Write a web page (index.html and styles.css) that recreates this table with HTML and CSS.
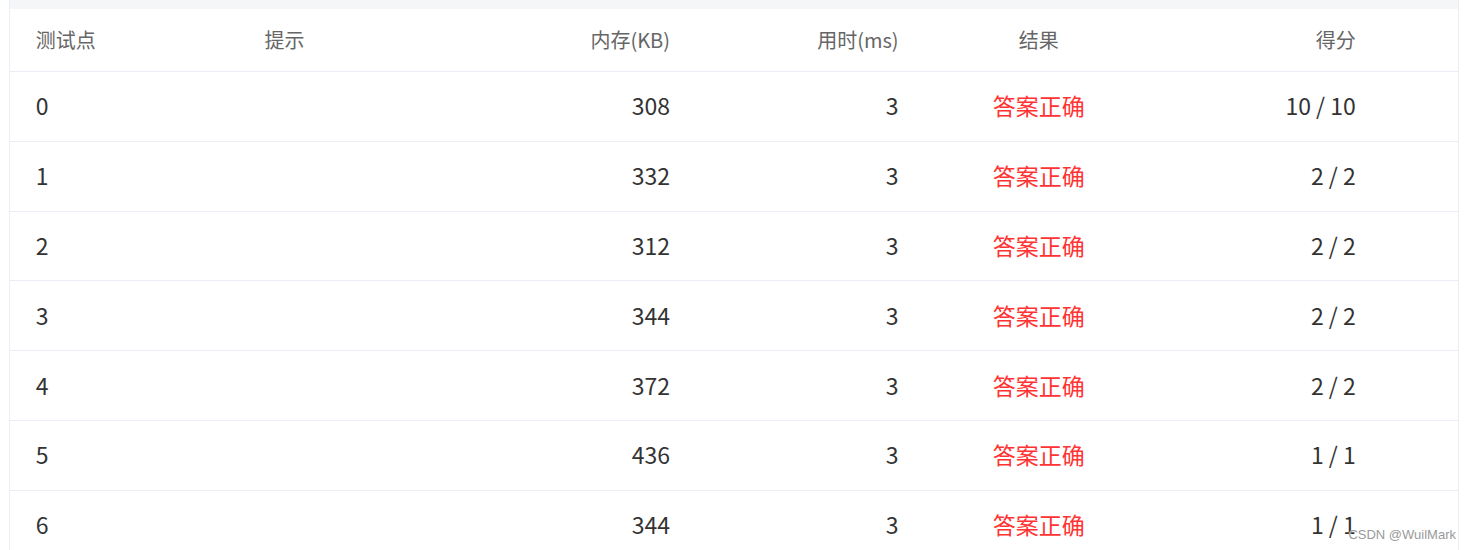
FILE: index.html
```html
<!DOCTYPE html>
<html lang="zh">
<head>
<meta charset="utf-8">
<title>测试点结果</title>
<link rel="stylesheet" href="styles.css">
</head>
<body>
<div class="panel">
  <div class="topband"></div>
  <div class="table">
    <div class="row head">
      <div class="c l">测试点</div>
      <div class="c l">提示</div>
      <div class="c r">内存(KB)</div>
      <div class="c r">用时(ms)</div>
      <div class="c m">结果</div>
      <div class="c r">得分</div>
      <div class="c"></div>
    </div>
    <div class="row">
      <div class="c l">0</div><div class="c l"></div><div class="c r">308</div><div class="c r">3</div><div class="c m ok">答案正确</div><div class="c r">10 / 10</div><div class="c"></div>
    </div>
    <div class="row">
      <div class="c l">1</div><div class="c l"></div><div class="c r">332</div><div class="c r">3</div><div class="c m ok">答案正确</div><div class="c r">2 / 2</div><div class="c"></div>
    </div>
    <div class="row">
      <div class="c l">2</div><div class="c l"></div><div class="c r">312</div><div class="c r">3</div><div class="c m ok">答案正确</div><div class="c r">2 / 2</div><div class="c"></div>
    </div>
    <div class="row">
      <div class="c l">3</div><div class="c l"></div><div class="c r">344</div><div class="c r">3</div><div class="c m ok">答案正确</div><div class="c r">2 / 2</div><div class="c"></div>
    </div>
    <div class="row">
      <div class="c l">4</div><div class="c l"></div><div class="c r">372</div><div class="c r">3</div><div class="c m ok">答案正确</div><div class="c r">2 / 2</div><div class="c"></div>
    </div>
    <div class="row">
      <div class="c l">5</div><div class="c l"></div><div class="c r">436</div><div class="c r">3</div><div class="c m ok">答案正确</div><div class="c r">1 / 1</div><div class="c"></div>
    </div>
    <div class="row">
      <div class="c l">6</div><div class="c l"></div><div class="c r">344</div><div class="c r">3</div><div class="c m ok">答案正确</div><div class="c r">1 / 1</div><div class="c"></div>
    </div>
  </div>
  <div class="watermark">CSDN @WuilMark</div>
</div>
</body>
</html>
```
FILE: styles.css
```css
html, body {
  margin: 0;
  padding: 0;
  background: #ffffff;
  overflow: hidden;
}
body {
  font-family: "Noto Sans CJK SC", "Noto Sans", sans-serif;
  color: #333333;
}
.panel {
  position: relative;
  margin-left: 9px;
  width: 1448px;
  height: 550px;
  border-left: 1px solid #ebeef5;
  border-right: 1px solid #ebeef5;
  overflow: hidden;
}
.topband {
  height: 9px;
  background: #f5f6f8;
}
.table {
  display: flex;
  flex-direction: column;
}
.row {
  display: grid;
  grid-template-columns: repeat(6, 228.6px) 1fr;
  box-sizing: border-box;
  height: 69.8px;
  padding-bottom: 2px;
  border-bottom: 1px solid #ebeef5;
  align-items: center;
  font-size: 23px;
  color: #333333;
  flex: none;
}
.row.head {
  height: 63px;
  padding-bottom: 1px;
  font-size: 20px;
  color: #666666;
}
.c {
  padding: 0 25.8px;
  white-space: nowrap;
}
.l { text-align: left; }
.r { text-align: right; }
.m { text-align: center; }
.ok { color: #ff3333; }
.watermark {
  position: absolute;
  right: 2px;
  bottom: 8px;
  font-family: "Liberation Sans", Arial, sans-serif;
  font-size: 13px;
  color: #9a9a9a;
  text-shadow: 0 0 1px #ffffff;
}
```
